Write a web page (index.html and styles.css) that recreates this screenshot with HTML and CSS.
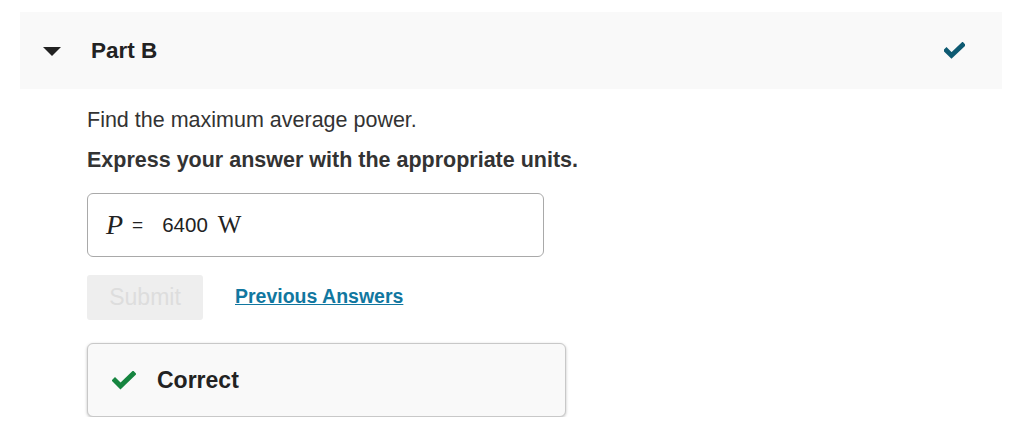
FILE: index.html
```html
<!DOCTYPE html>
<html>
<head>
    <title>Part B</title>
    <link rel="stylesheet" href="styles.css">
</head>
<body>
    <div class="part">
        <div class="part-header">
            <span class="caret"></span>
            <h2 class="part-title">Part B</h2>
            <svg class="status-check" width="21" height="17" viewBox="0 0 21 17">
                <path d="M2.5 8.5 L7.5 13.5 L18.5 3" fill="none" stroke="#0e5a72" stroke-width="4.8" stroke-linecap="square"/>
            </svg>
        </div>
        <div class="part-body">
            <p class="question">Find the maximum average power.</p>
            <p class="instruction">Express your answer with the appropriate units.</p>
            <div class="answer-box">
                <span class="var">P</span><span class="eq">=</span><span class="value">6400</span><span class="unit">W</span>
            </div>
            <div class="actions">
                <button class="submit" disabled>Submit</button>
                <a class="prev-link" href="#">Previous Answers</a>
            </div>
            <div class="feedback">
                <svg class="correct-check" width="24" height="19" viewBox="0 0 24 19">
                    <path d="M3 9.5 L8.5 15 L21 3" fill="none" stroke="#168540" stroke-width="5" stroke-linecap="square"/>
                </svg>
                <span class="feedback-text">Correct</span>
            </div>
        </div>
    </div>
</body>
</html>
```

FILE: styles.css
```css
body {
    margin: 0;
    padding: 12px 22px 0 20px;
    font-family: "Liberation Sans", Arial, sans-serif;
    color: #333;
    background: #fff;
}
.part-header {
    display: flex;
    align-items: center;
    height: 77px;
    background: #f9f9f9;
    padding: 0 37px 0 23px;
}
.caret {
    width: 0;
    height: 0;
    border-left: 9px solid transparent;
    border-right: 9px solid transparent;
    border-top: 9px solid #222;
    margin-top: 2px;
}
.part-title {
    margin: 0 0 0 30px;
    font-size: 22.5px;
    font-weight: bold;
    color: #222;
    flex: 1;
}
.status-check {
    display: block;
}
.part-body {
    padding: 18px 0 0 67px;
}
.question {
    margin: 0;
    font-size: 21.5px;
    line-height: 26px;
}
.instruction {
    margin: 14px 0 0;
    font-size: 21.5px;
    font-weight: bold;
    line-height: 26px;
}
.answer-box {
    margin-top: 20px;
    width: 457px;
    height: 64px;
    border: 1px solid #a9a9a9;
    border-radius: 6px;
    display: flex;
    align-items: center;
    padding-left: 18px;
    box-sizing: border-box;
    color: #222;
}
.var {
    font-family: "Liberation Serif", "Times New Roman", serif;
    font-style: italic;
    font-size: 28px;
}
.eq {
    font-size: 19px;
    margin: 0 19px 0 9px;
}
.value {
    font-size: 20.5px;
}
.unit {
    font-family: "Liberation Serif", "Times New Roman", serif;
    font-size: 25px;
    margin-left: 10px;
}
.actions {
    display: flex;
    align-items: center;
    margin-top: 18px;
}
.submit {
    width: 116px;
    height: 45px;
    border: none;
    border-radius: 3px;
    background: #eeeeee;
    color: #dddddd;
    font-family: "Liberation Sans", Arial, sans-serif;
    font-size: 23px;
    padding: 0;
}
.prev-link {
    margin-left: 32px;
    font-size: 19.5px;
    font-weight: bold;
    color: #1177a0;
    text-decoration: underline;
    margin-top: -3px;
}
.feedback {
    margin-top: 23px;
    width: 479px;
    height: 74px;
    box-sizing: border-box;
    border: 1px solid #c8c8c8;
    border-radius: 6px;
    background: #f9f9f9;
    box-shadow: 0 1px 3px rgba(0, 0, 0, 0.25);
    display: flex;
    align-items: center;
    padding-left: 24px;
}
.correct-check {
    display: block;
}
.feedback-text {
    margin-left: 21px;
    font-size: 23px;
    font-weight: bold;
    color: #222;
}
```
